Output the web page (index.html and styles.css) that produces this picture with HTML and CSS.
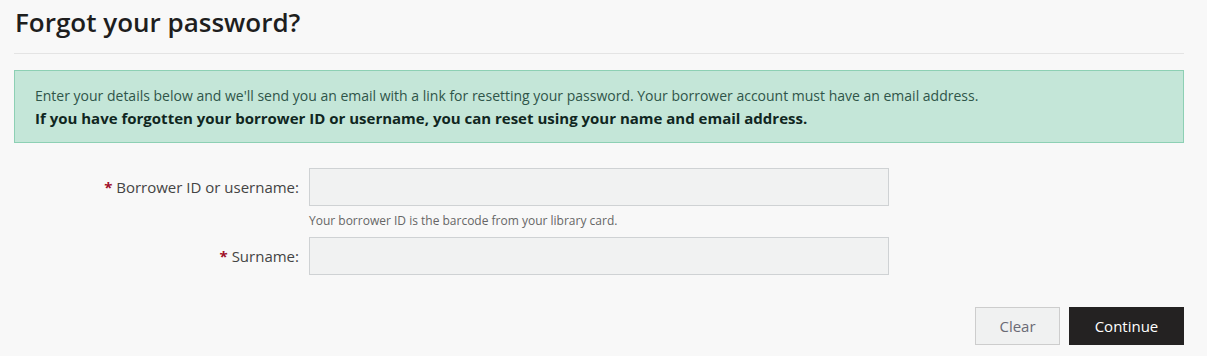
FILE: index.html
```html
<html lang="en">
  <head>
    <meta charset="UTF-8" />
    <meta name="viewport" content="width=device-width, initial-scale=1.0" />
    <title>Forgot your password?</title>
    <link rel="stylesheet" href="styles.css">
  </head>
  <body>
    <div class="container">
      <h1 class="page-title">Forgot your password?</h1>
      <div class="info-box">
        <p>Enter your details below and we'll send you an email with a link for resetting your password. Your borrower account must have an email address.</p>
        <p class="strong">If you have forgotten your borrower ID or username, you can reset using your name and email address.</p>
      </div>
      <form action="#" class="reset-form">
        <div class="form-row">
          <label for="borrower-id"><span class="required">*</span> Borrower ID or username:</label>
          <div class="field">
            <input type="text" id="borrower-id" name="borrowerId" />
            <span class="hint">Your borrower ID is the barcode from your library card.</span>
          </div>
        </div>
        <div class="form-row">
          <label for="surname"><span class="required">*</span> Surname:</label>
          <div class="field">
            <input type="text" id="surname" name="surname" />
          </div>
        </div>
        <div class="form-actions">
          <button type="reset" class="btn btn-clear">Clear</button>
          <button type="submit" class="btn btn-continue">Continue</button>
        </div>
      </form>
    </div>
  </body>
</html>
```

FILE: styles.css
```css
/* body styles */
body {
  margin: 0;
  padding: 0;
  background-color: #f8f8f8;
  font-family: "Open Sans", "Noto Sans", sans-serif;
  color: #333;
}

.container {
  padding: 0 23px 0 14px;
}

/* heading */
.page-title {
  margin: 0;
  padding: 5px 0 13px 1px;
  font-size: 26px;
  line-height: 35px;
  font-weight: 600;
  color: #1e1e1e;
  border-bottom: 1px solid #e4e4e4;
}

/* info box */
.info-box {
  margin-top: 16px;
  padding: 13px 20px 12px;
  background-color: #c4e6d8;
  border: 1px solid #8dd0b4;
  font-size: 14px;
  line-height: 23px;
  color: #2f5549;
}

.info-box p {
  margin: 0;
}

.info-box .strong {
  font-size: 15px;
  font-weight: 700;
  color: #10261f;
}

/* form */
.reset-form {
  margin-top: 25px;
}

.form-row {
  display: flex;
  align-items: flex-start;
  margin-bottom: 6px;
}

.form-row label {
  width: 285px;
  padding-right: 10px;
  text-align: right;
  font-size: 15px;
  line-height: 38px;
  color: #444;
}

.required {
  color: #a0102a;
  font-weight: 700;
}

.field {
  display: flex;
  flex-direction: column;
}

.field input {
  box-sizing: border-box;
  width: 580px;
  height: 38px;
  background-color: #f1f2f2;
  border: 1px solid #cfd2d4;
  font-size: 15px;
}

.hint {
  padding: 6px 0 2px;
  font-size: 12px;
  color: #666;
}

.form-actions {
  display: flex;
  justify-content: flex-end;
  gap: 9px;
  margin-top: 32px;
}

.btn {
  box-sizing: border-box;
  height: 38px;
  font-family: inherit;
  font-size: 15px;
  cursor: pointer;
}

.btn-clear {
  width: 85px;
  background-color: #f0f1f1;
  border: 1px solid #cdcdcd;
  color: #6a6a75;
}

.btn-continue {
  width: 115px;
  background-color: #242222;
  border: none;
  color: #fff;
}
```
